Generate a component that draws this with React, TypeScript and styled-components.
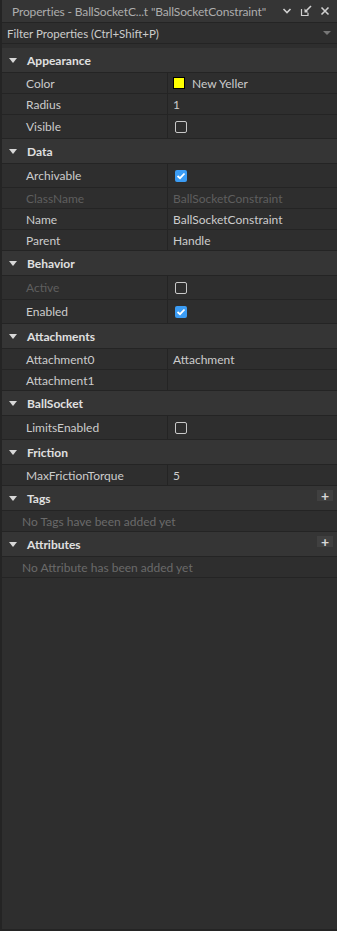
import React from 'react'
import styled, { createGlobalStyle } from 'styled-components'

type Prop =
  | { kind: 'text'; name: string; value?: string; disabled?: boolean }
  | { kind: 'check'; name: string; checked: boolean; disabled?: boolean }
  | { kind: 'color'; name: string; value: string; swatch: string }

type Section = { title: string; props?: Prop[]; empty?: string; addable?: boolean }

const sections: Section[] = [
  {
    title: 'Appearance',
    props: [
      { kind: 'color', name: 'Color', value: 'New Yeller', swatch: '#ffff00' },
      { kind: 'text', name: 'Radius', value: '1' },
      { kind: 'check', name: 'Visible', checked: false },
    ],
  },
  {
    title: 'Data',
    props: [
      { kind: 'check', name: 'Archivable', checked: true },
      { kind: 'text', name: 'ClassName', value: 'BallSocketConstraint', disabled: true },
      { kind: 'text', name: 'Name', value: 'BallSocketConstraint' },
      { kind: 'text', name: 'Parent', value: 'Handle' },
    ],
  },
  {
    title: 'Behavior',
    props: [
      { kind: 'check', name: 'Active', checked: false, disabled: true },
      { kind: 'check', name: 'Enabled', checked: true },
    ],
  },
  {
    title: 'Attachments',
    props: [
      { kind: 'text', name: 'Attachment0', value: 'Attachment' },
      { kind: 'text', name: 'Attachment1', value: '' },
    ],
  },
  { title: 'BallSocket', props: [{ kind: 'check', name: 'LimitsEnabled', checked: false }] },
  { title: 'Friction', props: [{ kind: 'text', name: 'MaxFrictionTorque', value: '5' }] },
  { title: 'Tags', empty: 'No Tags have been added yet', addable: true },
  { title: 'Attributes', empty: 'No Attribute has been added yet', addable: true },
]

export default function App() {
  return (
    <>
      <GlobalStyle />
      <Panel>
        <TitleBar>
          <Title>Properties - BallSocketC...t "BallSocketConstraint"</Title>
          <TitleIcons>
            <svg width="10" height="8" viewBox="0 0 10 8">
              <path d="M1.5 2 L5 5.5 L8.5 2" stroke="#d0d0d0" strokeWidth="1.6" fill="none" />
            </svg>
            <svg width="12" height="12" viewBox="0 0 12 12">
              <path d="M1.5 4 V10.5 H8 V8" stroke="#d0d0d0" strokeWidth="1.2" fill="none" />
              <path d="M11 1 L5.5 6.5" stroke="#d0d0d0" strokeWidth="1.6" />
              <path d="M4.5 3.5 V7.5 H8.5 Z" fill="#d0d0d0" />
            </svg>
            <svg width="10" height="10" viewBox="0 0 10 10">
              <path d="M1.5 1.5 L8.5 8.5 M8.5 1.5 L1.5 8.5" stroke="#d0d0d0" strokeWidth="1.6" />
            </svg>
          </TitleIcons>
        </TitleBar>
        <FilterBar>
          <span>Filter Properties (Ctrl+Shift+P)</span>
          <FilterArrow />
        </FilterBar>
        <Spacer />
        {sections.map((section) => (
          <div key={section.title}>
            <Header>
              <Caret />
              <HeaderTitle>{section.title}</HeaderTitle>
              {section.addable && <AddButton>+</AddButton>}
            </Header>
            {section.empty && <EmptyRow>{section.empty}</EmptyRow>}
            {section.props?.map((prop) => (
              <Row key={prop.name} tall={prop.kind === 'check'}>
                <NameCell disabled={prop.disabled}>{prop.name}</NameCell>
                <ValueCell disabled={prop.disabled}>
                  {prop.kind === 'text' && prop.value}
                  {prop.kind === 'color' && (
                    <>
                      <Swatch color={prop.swatch} />
                      {prop.value}
                    </>
                  )}
                  {prop.kind === 'check' &&
                    (prop.checked ? (
                      <CheckBox checked>
                        <svg width="10" height="8" viewBox="0 0 10 8">
                          <path d="M1.5 4 L4 6.2 L8.5 1.5" stroke="#fff" strokeWidth="1.8" fill="none" />
                        </svg>
                      </CheckBox>
                    ) : (
                      <CheckBox checked={false} />
                    ))}
                </ValueCell>
              </Row>
            ))}
          </div>
        ))}
      </Panel>
    </>
  )
}

const GlobalStyle = createGlobalStyle`
  body {
    margin: 0;
    background: #2e2e2e;
    font-family: Lato, "Noto Sans", sans-serif;
  }
`

const Panel = styled.div`
  width: 337px;
  height: 931px;
  box-sizing: border-box;
  background: #2e2e2e;
  border-left: 2px solid #242424;
  border-bottom: 2px solid #242424;
  display: flex;
  flex-direction: column;
  overflow: hidden;
`

const TitleBar = styled.div`
  height: 22px;
  flex: none;
  display: flex;
  align-items: center;
  padding: 0 7px 0 12px;
  background: #353535;
  margin-left: -2px;
`

const Title = styled.span`
  flex: 1;
  color: #adadad;
  font-size: 12px;
  letter-spacing: -0.15px;
  white-space: nowrap;
`

const TitleIcons = styled.div`
  display: flex;
  align-items: center;
  gap: 8px;
`

const FilterBar = styled.div`
  height: 20px;
  flex: none;
  display: flex;
  align-items: center;
  justify-content: space-between;
  padding: 0 6px 0 5px;
  border-top: 1px solid #242424;
  border-bottom: 1px solid #242424;
  background: #2e2e2e;
  color: #cccccc;
  font-size: 11.5px;
`

const FilterArrow = styled.div`
  width: 0;
  height: 0;
  border-left: 4px solid transparent;
  border-right: 4px solid transparent;
  border-top: 4px solid #777;
`

const Spacer = styled.div`
  height: 4px;
  flex: none;
`

const Header = styled.div`
  height: 24px;
  display: flex;
  align-items: center;
  background: #353535;
  border-bottom: 1px solid #242424;
  padding-left: 7px;
  padding-right: 4px;
`

const Caret = styled.div`
  width: 0;
  height: 0;
  border-left: 4px solid transparent;
  border-right: 4px solid transparent;
  border-top: 5px solid #d8d8d8;
  margin-right: 10px;
`

const HeaderTitle = styled.span`
  flex: 1;
  color: #e0e0e0;
  font-weight: bold;
  font-size: 12px;
`

const AddButton = styled.div`
  width: 16px;
  height: 11px;
  display: flex;
  align-items: center;
  justify-content: center;
  background: #404040;
  color: #d8d8d8;
  font-size: 14px;
  font-weight: bold;
  line-height: 1;
  margin-top: -5px;
`

const EmptyRow = styled.div`
  height: 20px;
  display: flex;
  align-items: center;
  padding-left: 20px;
  border-bottom: 1px solid #242424;
  color: #6a6a6a;
  font-size: 12px;
`

const Row = styled.div<{ tall: boolean }>`
  height: ${(p) => (p.tall ? 23 : 20)}px;
  display: grid;
  grid-template-columns: 166px 1fr;
  border-bottom: 1px solid #242424;
`

const NameCell = styled.div<{ disabled?: boolean }>`
  display: flex;
  align-items: center;
  padding-left: 24px;
  border-right: 1px solid #242424;
  color: ${(p) => (p.disabled ? '#5e5e5e' : '#cccccc')};
  font-size: 12px;
`

const ValueCell = styled.div<{ disabled?: boolean }>`
  display: flex;
  align-items: center;
  padding-left: 5px;
  color: ${(p) => (p.disabled ? '#5e5e5e' : '#cccccc')};
  font-size: 12px;
`

const Swatch = styled.div<{ color: string }>`
  width: 10px;
  height: 10px;
  background: ${(p) => p.color};
  border: 1px solid #000;
  margin-right: 7px;
`

const CheckBox = styled.div<{ checked: boolean }>`
  width: ${(p) => (p.checked ? 12 : 10)}px;
  height: ${(p) => (p.checked ? 12 : 10)}px;
  margin-left: 2px;
  border-radius: 2px;
  display: flex;
  align-items: center;
  justify-content: center;
  background: ${(p) => (p.checked ? '#3b9cf4' : 'transparent')};
  border: ${(p) => (p.checked ? 'none' : '1px solid #c8c8c8')};
`
